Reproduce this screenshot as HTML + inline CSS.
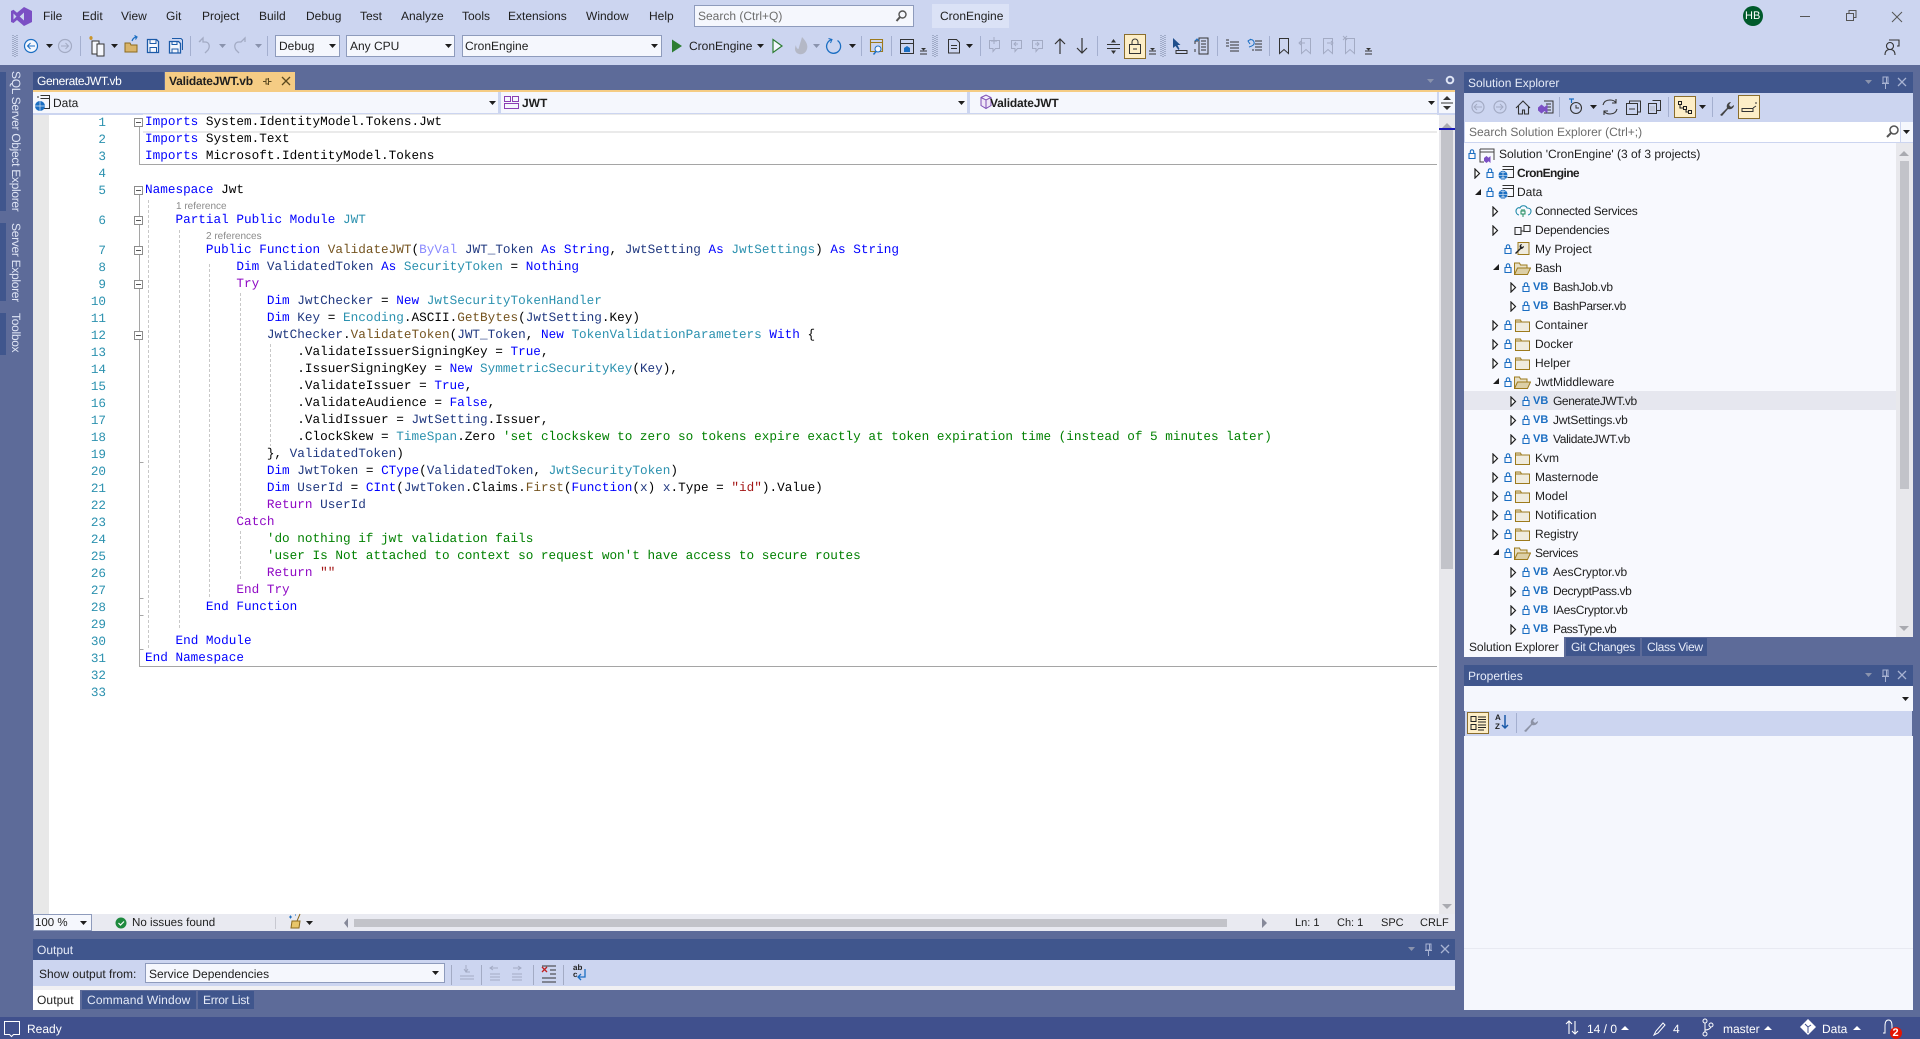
<!DOCTYPE html>
<html lang="en"><head><meta charset="utf-8"><title>CronEngine - Visual Studio</title>
<style>
html,body{margin:0;padding:0;width:1920px;height:1039px;overflow:hidden;background:#5d6b99}
body{position:relative;font-family:"Liberation Sans",sans-serif;font-size:12px;color:#1e1e1e;text-rendering:geometricPrecision}
.b{position:absolute}
.a{position:absolute;white-space:pre;line-height:18px;height:18px}
.w{color:#fff}
.lt{color:#e6ebf8}
.t{position:absolute;white-space:pre;line-height:19px;height:19px;color:#1e1e1e;margin-top:1px}
.vb{position:absolute;white-space:pre;line-height:19px;color:#1b6ec2;font-weight:bold;font-size:11px;margin-top:1px}
.cd{position:absolute;left:145px;white-space:pre;font-family:"Liberation Mono",monospace;font-size:12.69px;line-height:17px;height:17px;color:#000;margin-top:-1px}
.ln{position:absolute;left:70px;width:36px;text-align:right;font-family:"Liberation Mono",monospace;font-size:12.65px;line-height:17px;color:#2b91af}
.k{color:#0000ff}.y{color:#2b91af}.c{color:#008000}.m{color:#74531f}.p{color:#8f08c4}.s{color:#a31515}.v{color:#1f377f}.u{color:#8a8aff}
.cb{position:absolute;background:#f5f7fd;border:1px solid #8e9bbc;box-sizing:border-box;line-height:20px;padding-left:4px;white-space:pre}
.vt{position:absolute;writing-mode:vertical-rl;white-space:pre;color:#dfe5f5;line-height:14px;font-size:12px;letter-spacing:-.3px}
svg{position:absolute;left:0;top:0}
</style></head><body>

<!-- Backgrounds -->
<div class="b" style="left:0;top:0;width:1920px;height:65px;background:#ccd5f0"></div>
<div class="b" style="left:932px;top:4px;width:77px;height:24px;background:#dbe2f6"></div>
<div class="b" style="left:694px;top:5px;width:220px;height:22px;background:#f5f7fd;border:1px solid #8e9bbc;box-sizing:border-box"></div>
<div class="cb" style="left:275px;top:35px;width:65px;height:22px"></div>
<div class="cb" style="left:346px;top:35px;width:109px;height:22px"></div>
<div class="cb" style="left:462px;top:35px;width:200px;height:22px"></div>

<!-- left strips -->
<div class="b" style="left:0;top:72px;width:6px;height:139px;background:#40568d"></div>
<div class="b" style="left:0;top:223px;width:6px;height:78px;background:#40568d"></div>
<div class="b" style="left:0;top:313px;width:6px;height:42px;background:#40568d"></div>
<div class="vt" style="left:9px;top:71px">SQL Server Object Explorer</div>
<div class="vt" style="left:9px;top:223px">Server Explorer</div>
<div class="vt" style="left:9px;top:313px">Toolbox</div>

<!-- Editor tabs -->
<div class="b" style="left:33px;top:72px;width:131px;height:18px;background:#3d5288"></div>
<div class="b" style="left:165px;top:72px;width:130px;height:18px;background:#f5cc84"></div>
<div class="b" style="left:33px;top:90px;width:1422px;height:2px;background:#f5cc84"></div>
<div class="b" style="left:33px;top:92px;width:1422px;height:23px;background:#ccd5f0"></div>
<div class="b" style="left:33px;top:92px;width:465px;height:21px;background:#f5f7fd"></div>
<div class="b" style="left:501px;top:92px;width:466px;height:21px;background:#f5f7fd"></div>
<div class="b" style="left:970px;top:92px;width:467px;height:21px;background:#f5f7fd"></div>
<div class="b" style="left:1439px;top:92px;width:16px;height:21px;background:#f5f7fd"></div>

<!-- Editor -->
<div class="b" style="left:33px;top:115px;width:1422px;height:799px;background:#fff"></div>
<div class="b" style="left:33px;top:115px;width:16px;height:799px;background:#e8e8e8"></div>
<div class="b" style="left:143px;top:114px;width:1294px;height:16px;border:solid #eaeaea;border-width:1px 0 2px 0"></div>
<div class="b" style="left:1439px;top:115px;width:16px;height:799px;background:#e8e8ec"></div>
<div class="b" style="left:1441px;top:130px;width:12px;height:439px;background:#c2c3c9"></div>
<div class="b" style="left:1439px;top:128px;width:16px;height:2px;background:#1a1ab8"></div>
<div class="b" style="left:33px;top:914px;width:1422px;height:17px;background:#e9eaf1"></div>
<div class="b" style="left:33px;top:914px;width:59px;height:17px;background:#f5f7fd;border:1px solid #8e9bbc;box-sizing:border-box"></div>
<div class="b" style="left:354px;top:919px;width:873px;height:8px;background:#c2c3c9"></div>
<div class="b" style="left:275px;top:917px;width:1px;height:12px;background:#c8c9d1"></div>

<!-- Output -->
<div class="b" style="left:33px;top:939px;width:1422px;height:21px;background:#40568d"></div>
<div class="b" style="left:33px;top:960px;width:1422px;height:26px;background:#ccd5f0"></div>
<div class="b" style="left:33px;top:986px;width:1422px;height:4px;background:#f0f0f3"></div>
<div class="b" style="left:33px;top:990px;width:47px;height:20px;background:#fff"></div>
<div class="b" style="left:82px;top:991px;width:114px;height:18px;background:#40568d"></div>
<div class="b" style="left:198px;top:991px;width:56px;height:18px;background:#40568d"></div>
<div class="cb" style="left:145px;top:963px;width:300px;height:20px"></div>

<!-- Status bar -->
<div class="b" style="left:0;top:1017px;width:1920px;height:22px;background:#40508d"></div>

<!-- Right panel -->
<div class="b" style="left:1464px;top:72px;width:449px;height:21px;background:#40568d"></div>
<div class="b" style="left:1464px;top:93px;width:449px;height:28px;background:#ccd5f0"></div>
<div class="b" style="left:1464px;top:121px;width:449px;height:22px;background:#ccd5f0"></div>
<div class="b" style="left:1465px;top:122px;width:435px;height:20px;background:#fff"></div>
<div class="b" style="left:1901px;top:122px;width:12px;height:20px;background:#f5f7fd"></div>
<div class="b" style="left:1464px;top:143px;width:432px;height:494px;background:#f8f9fe"></div>
<div class="b" style="left:1896px;top:143px;width:17px;height:494px;background:#e8e8ec"></div>
<div class="b" style="left:1900px;top:161px;width:9px;height:328px;background:#c2c3c9"></div>
<div class="b" style="left:1464px;top:391px;width:432px;height:19px;background:#e6e7ef"></div>
<div class="b" style="left:1464px;top:637px;width:100px;height:20px;background:#f8f9fe"></div>
<div class="b" style="left:1566px;top:638px;width:74px;height:18px;background:#40568d"></div>
<div class="b" style="left:1642px;top:638px;width:65px;height:18px;background:#40568d"></div>
<div class="b" style="left:1464px;top:665px;width:449px;height:21px;background:#40568d"></div>
<div class="b" style="left:1464px;top:686px;width:449px;height:25px;background:#f5f7fd"></div>
<div class="b" style="left:1465px;top:711px;width:447px;height:25px;background:#ccd5f0"></div>
<div class="b" style="left:1464px;top:736px;width:449px;height:274px;background:#f5f7fd"></div>
<div class="b" style="left:1464px;top:948px;width:449px;height:1px;background:#e8eaf2"></div>

<!-- Icons -->
<svg width="1920" height="1039" viewBox="0 0 1920 1039" fill="none">
<defs>
<symbol id="lock" viewBox="0 0 8 10" width="8" height="10"><path d="M1 4.5h6v5H1zM2.300 4.500V2.500a1.700 1.700 0 0 1 3.400 0v2" stroke="#1b6ec2" stroke-width="1.100" fill="#f8f9fe"/></symbol>
<symbol id="fc" viewBox="0 0 15 13" width="15" height="13"><path d="M.5 1h5l1 2h8v9.500H.5z" fill="#efebde" stroke="#9d7a1c"/><path d="M.5 3H6" stroke="#9d7a1c"/></symbol>
<symbol id="fo" viewBox="0 0 17 13" width="17" height="13"><path d="M.5 12.500V1h5l1 2h6.500v3" stroke="#9d7a1c" fill="#e8e0c6"/><path d="M.5 12.500L3.500 6h13l-3 6.500z" fill="#dccfa6" stroke="#9d7a1c"/></symbol>
<symbol id="ar" viewBox="0 0 7 11" width="7" height="11"><path d="M1 1l4.500 4.500L1 10z" fill="#fff" stroke="#1e1e1e" stroke-width="1.200"/></symbol>
<symbol id="ex" viewBox="0 0 8 8" width="8" height="8"><path d="M7 1v6H1z" fill="#1e1e1e"/></symbol>
<symbol id="dd" viewBox="0 0 7 4" width="7" height="4"><path d="M0 0h7L3.500 4z" fill="#1e1e1e"/></symbol>
<symbol id="ddg" viewBox="0 0 7 4" width="7" height="4"><path d="M0 0h7L3.500 4z" fill="#8a93ad"/></symbol>
<symbol id="proj" viewBox="0 0 16 14" width="16" height="14"><path d="M4.500.5h11v11h-6" stroke="#333" fill="#f8f9fe"/><path d="M4.500 3.500h11" stroke="#333"/><circle cx="5" cy="9.300" r="4.500" fill="#1b6ec2"/><path d="M.6 9.300h9M5 5v8.600M2.500 6c1.500 1 3.500 1 5 0M2.500 12.500c1.500-1 3.500-1 5 0" stroke="#dbe7f5" stroke-width=".7"/></symbol>
<symbol id="clo" viewBox="0 0 10 10" width="10" height="10"><path d="M1 1l8 8M9 1l-8 8" stroke="#a8b3d2" stroke-width="1.300"/></symbol>
<symbol id="pin" viewBox="0 0 9 13" width="9" height="13"><path d="M2 1h5v6H2zM1 7.500h7M4.500 8v5M5.500 1v6" stroke="#a8b3d2"/></symbol>
</defs>

<!-- VS logo -->
<path d="M24 7l8 4v11l-8 4-7-6-3.500 3L11 22V11l2.500-1.300L17 12.800zM13.500 13.500v6l3-3zM24 12.500l-4.300 4 4.300 4z" fill="#7b4fc4" fill-rule="evenodd"/>

<!-- search icon -->
<circle cx="902.500" cy="14.500" r="3.500" stroke="#555" stroke-width="1.400"/><path d="M900 17l-3.500 4" stroke="#555" stroke-width="2"/>

<!-- Toolbar left -->
<path d="M13 35v22M15 36v22M17 35v22" stroke="#76829f" stroke-dasharray="1 1"/>
<circle cx="31" cy="46" r="6.500" stroke="#1b6ec2" stroke-width="1.200" fill="#f5f7fd"/><path d="M35 46h-7M30.500 43l-3 3 3 3" stroke="#1b6ec2"/>
<use href="#dd" x="46" y="44"/>
<circle cx="65" cy="46" r="6.500" stroke="#a3abc4" stroke-width="1.200"/><path d="M61 46h7M65.500 43l3 3-3 3" stroke="#a3abc4"/>
<path d="M80.500 36v20M190.500 36v20M267.500 36v20M861.500 36v20M891.500 36v20M980.500 36v20M1097.500 36v20M1217.500 36v20M1269.500 36v20" stroke="#a4afcf"/>
<path d="M92 41h7v13h-7z" stroke="#333" fill="#f5f7fd"/><path d="M97 44h7v12h-7z" stroke="#333" fill="#f5f7fd"/><path d="M91 36v4M89 38h4M90 36.500l2 3M92 36.500l-2 3" stroke="#c9952a"/>
<use href="#dd" x="111" y="44"/>
<path d="M125 52V43h5l1 2h6v7z" fill="#d9b46a" stroke="#8c6a1e"/><path d="M132 41c1-3 3-4 5-4M134.500 35.500l2.500 1.500-1.500 2.500" stroke="#1b6ec2" stroke-width="1.200"/>
<path d="M147.500 39.500h9l2 2v11h-11z" stroke="#1b5aa8" stroke-width="1.300" fill="#f5f7fd"/><path d="M150 39.500v4h6v-4M150 52.500v-5h6.500v5" stroke="#1b5aa8"/>
<path d="M169.500 41.500h9l2 2v9.500h-11z" stroke="#1b5aa8" stroke-width="1.300" fill="#f5f7fd"/><path d="M172 38.500h9l1.500 1.500v10" stroke="#1b5aa8"/><path d="M172 41.500v3h5v-3M172 53v-4h6v4" stroke="#1b5aa8"/>
<path d="M200 42v-1l-1 1 4-4v4h2c4 0 5.500 4 3 8l-3 3" stroke="#a3abc4" stroke-width="1.300"/>
<use href="#ddg" x="219" y="44"/>
<path d="M245 42v-4l-4 4h-2c-4 0-5.500 4-3 8l3 3" stroke="#a3abc4" stroke-width="1.300"/>
<use href="#ddg" x="255" y="44"/>
<use href="#dd" x="329" y="44"/><use href="#dd" x="445" y="44"/><use href="#dd" x="651" y="44"/>
<path d="M672 39.500l10 6.500-10 6.500z" fill="#2d7d32"/>
<use href="#dd" x="757" y="44"/>
<path d="M773 39.500l9 6.500-9 6.500z" stroke="#2d7d32" stroke-width="1.200" fill="#f5f7fd"/>
<path d="M802 37c5 5 6 9 5 12-1 4-5 6-8 5-4-1-5-5-3-9 0 2 1 4 2.500 4 1-4 2.500-8 3.500-12z" fill="#b4b8c6"/>
<use href="#ddg" x="813" y="44"/>
<path d="M832 39.500a7 7 0 1 0 5.500 1" stroke="#1b6ec2" stroke-width="1.300"/><path d="M828.500 38.500l3.500 1-1.500 3.500" stroke="#1b6ec2"/>
<use href="#dd" x="849" y="44"/>
<path d="M870.500 39.500h12v12h-12zM870.500 42.500h12" stroke="#9d7a1c" stroke-width="1.100"/><circle cx="878" cy="49" r="3" stroke="#1b6ec2" fill="#f5f7fd"/><path d="M876 51.500l-2.500 3" stroke="#1b6ec2" stroke-width="1.400"/>
<path d="M900.500 39.500h13v14h-13zM900.500 43.500h13" stroke="#333"/><path d="M904 52v-4l3-2 3 2v4z" fill="#1b6ec2"/>
<path d="M920 51h7M920 54h7" stroke="#333"/><path d="M921 48l2.500 2.500L926 48z" fill="#333"/>
<path d="M933 35v22M935 36v22M937 35v22" stroke="#76829f" stroke-dasharray="1 1"/>
<path d="M948.500 39.500h8l3 3v10.500h-11zM951 45.500h6M951 48.500h6" stroke="#333"/>
<use href="#dd" x="966" y="44"/>
<g stroke="#a3abc4"><path d="M989.500 40.500h10v8h-4l-2.500 3v-3h-3.500zM994 37v7M991 41h6"/><path d="M1011.500 40.500h10v8h-4l-2.500 3v-3h-3.500zM1018 44l-4 0M1016 42l-2 2 2 2"/><path d="M1032.500 40.500h10v8h-4l-2.500 3v-3h-3.500zM1035 44h4M1037 42l2 2-2 2"/></g>
<path d="M1060 54V39M1055 44l5-5 5 5M1082 38v15M1077 48l5 5 5-5" stroke="#333" stroke-width="1.200"/>
<path d="M1107 44.500h13M1107 48.500h13" stroke="#333"/><path d="M1111 42.500l2.500-3.500 2.500 3.500zM1111 50.500l2.500 3.500 2.500-3.500z" fill="#333"/>
<rect x="1124.500" y="34.500" width="21" height="24" fill="#fdeec7" stroke="#8a6d2c"/><path d="M1129.500 44.500h11v9h-11zM1132 44.500v-2.500a3 3 0 0 1 6 0v2.500M1133 49h4" stroke="#333"/>
<path d="M1149 51h7M1149 54h7" stroke="#333"/><path d="M1150 48l2.500 2.500L1155 48z" fill="#333"/>
<path d="M1161 35v22M1163 36v22M1165 35v22" stroke="#76829f" stroke-dasharray="1 1"/>
<path d="M1173 38v10l2.500-2 3 4 1-1-2-4h3z" fill="#1e4e8c"/><path d="M1176 50.500h11v3h-11z" stroke="#333"/>
<path d="M1195 44v-3h3M1195 52v-3M1199 38h9v16h-9zM1201 41h5M1201 44h5M1201 47h5M1201 50h5" stroke="#333"/><path d="M1195 41l2-2 2 2" stroke="#1b6ec2"/>
<path d="M1226 40h3M1230 42h9M1230 45h9M1230 48h9M1230 51h9M1226 43h3M1226 46h3" stroke="#333"/>
<path d="M1248 41c2-2 5-2 6 1s-2 4-5 5M1251 39l-3 2 2 3" stroke="#1b6ec2"/><path d="M1255 41h7M1255 44h7M1255 47h7M1255 50h7M1252 50h2" stroke="#333"/>
<path d="M1279.500 38.500h9v15l-4.500-4-4.500 4z" stroke="#333"/>
<g stroke="#a3abc4"><path d="M1301.500 38.500h9v15l-4.500-4-4.500 4zM1299 43h6M1301 41l-2 2 2 2"/><path d="M1323.500 38.500h9v15l-4.500-4-4.500 4zM1327 43h6M1331 41l2 2-2 2"/><path d="M1345.500 38.500h9v15l-4.500-4-4.500 4zM1343 36l4 4M1347 36l-4 4"/></g>
<path d="M1365 51h7M1365 54h7" stroke="#333"/><path d="M1366 48l2.500 2.500L1371 48z" fill="#333"/>

<!-- Top right -->
<circle cx="1753" cy="16" r="10" fill="#005a2b"/>
<path d="M1800 16.500h10" stroke="#555"/><path d="M1846.500 13.500h7v7h-7zM1849 13.500v-3h7v7h-2.500" stroke="#555"/>
<path d="M1892 12l10 10M1902 12l-10 10" stroke="#555"/>
<circle cx="1890" cy="46" r="3.500" stroke="#333" stroke-width="1.100"/><path d="M1885 55c0-4 2-5.500 5-5.500s5 1.500 5 5.500M1889 40h10v6h-2" stroke="#333" stroke-width="1.100"/>

<!-- Editor strip -->
<use href="#ddg" x="1427" y="79"/>
<circle cx="1450" cy="80" r="3.300" stroke="#dfe5f5" stroke-width="2"/>
<path d="M263 81.500h3M268.500 78v7M268.500 81.500h3M266 79v5h2.500v-5z" stroke="#5c4a1f"/>
<path d="M282 77l8 8M290 77l-8 8" stroke="#5c4a1f" stroke-width="1.300"/>

<!-- nav bar icons -->
<path d="M40.500 95.500h9v13h-6M38 96v2M40.500 98.500h9" stroke="#333"/><circle cx="40" cy="106" r="5" fill="#1b6ec2"/><path d="M35 106h10M40 101v10" stroke="#dbe7f5" stroke-width=".7"/>
<path d="M504.500 96.500h6v5h-6zM512.500 96.500h6v5h-6zM504.500 103.500h14v5h-14z" stroke="#8a3fb3"/>
<path d="M981 97.500l5-2.500 5 2.500v8l-5 3-5-3zM981 97.500l5 2.500 5-2.500M986 100v8" stroke="#7f4fb5" fill="#efe6f7"/>
<use href="#dd" x="489" y="101"/><use href="#dd" x="958" y="101"/><use href="#dd" x="1428" y="101"/>
<path d="M1441 103h12" stroke="#333"/><path d="M1443 100l4-4 4 4zM1443 106l4 4 4-4z" fill="#333"/>
<path d="M1442 128l5-5 5 5z" fill="#a9aab0"/>
<path d="M1442 904l5 5 5-5z" fill="#a9aab0"/>

<!-- Outlining -->
<path d="M139.500 127v37.500H1437M139.500 195v471.500H1437M139.500 462.500h4M139.500 598.500h4M139.500 615.500h4M139.500 649.500h4" stroke="#a5a5a5"/>
<g stroke="#8c8c8c" fill="#fff"><rect x="134.500" y="118.500" width="8" height="8"/><rect x="134.500" y="186.500" width="8" height="8"/><rect x="134.500" y="216.500" width="8" height="8"/><rect x="134.500" y="246.500" width="8" height="8"/><rect x="134.500" y="280.500" width="8" height="8"/><rect x="134.500" y="331.500" width="8" height="8"/></g>
<path d="M136 122.500h5M136 190.500h5M136 220.500h5M136 250.500h5M136 284.500h5M136 335.500h5" stroke="#555"/>
<g stroke="#c8c8c8" stroke-dasharray="3 2"><path d="M148.500 200v448M179.500 230v400M209.500 264v333M240.500 293v221M240.500 531v49M270.500 344v102"/></g>

<!-- Editor status -->
<use href="#dd" x="80" y="921"/>
<circle cx="121" cy="923" r="5.500" fill="#1e8a3e"/><path d="M118.500 923l2 2 3.500-3.500" stroke="#fff" stroke-width="1.200"/>
<path d="M300 914l-3 7M292 921h8l-1 7h-8z" stroke="#8c6a1e" fill="#e8c66a"/><path d="M289 917h3M290.500 915.500v3M295 915h1" stroke="#1b6ec2"/>
<use href="#dd" x="306" y="921"/>
<path d="M348 918v10l-4-5zM1262 918v10l5-5z" fill="#868999"/>

<!-- Output strip -->
<use href="#ddg" x="1408" y="947"/><use href="#pin" x="1424" y="943"/><use href="#clo" x="1440" y="944"/>
<use href="#dd" x="432" y="971"/>
<g stroke="#a3abc4"><path d="M451.500 965v20M481.500 965v20M533.500 965v20M563.500 965v20"/><path d="M460 976h14M460 979h14M466 965v7h4M464 969l2 3 2-3"/><path d="M490 974h10M490 977h10M490 980h10M490 968h8M493 966l-3 2 3 2"/><path d="M512 974h10M512 977h10M512 980h10M513 968h8M518 966l3 2-3 2"/></g>
<path d="M542 966h14M550 970h6M550 974h6M542 978h14M542 982h14" stroke="#333"/><path d="M542 967l5 5M547 967l-5 5" stroke="#c02020" stroke-width="1.300"/>
<path d="M585 969v8h-7M581 974l-3 3 3 3" stroke="#1b6ec2" stroke-width="1.300"/>

<!-- Status bar icons -->
<path d="M4.500 1021.500h15v13h-6l-2 2-2-2h-5z" stroke="#fff"/>
<path d="M1569 1034v-13M1566 1024l3-3 3 3M1575 1021v13M1572 1031l3 3 3-3" stroke="#fff" stroke-width="1.100"/>
<path d="M1621 1030l4-4 4 4zM1764 1030l4-4 4 4zM1853 1030l4-4 4 4z" fill="#fff"/>
<path d="M1654 1035l2-4 7-8 2 2-7 8z" stroke="#fff"/>
<circle cx="1705" cy="1021" r="2" stroke="#fff"/><circle cx="1705" cy="1034" r="2" stroke="#fff"/><circle cx="1711" cy="1025" r="2" stroke="#fff"/><path d="M1705 1023v9M1705 1030c3 0 5-1 6-3" stroke="#fff"/>
<path d="M1808 1019l8 8-8 8-8-8z" fill="#fff"/><path d="M1805 1024l3 3v6M1808 1027l3-2" stroke="#40508d"/>
<path d="M1883 1033h2v-7c0-5 2-6 3.500-6s3.500 1 3.500 6v4" stroke="#fff" fill="none"/>
<circle cx="1896" cy="1033" r="6" fill="#e51400"/>

<!-- Solution explorer title + toolbar -->
<use href="#ddg" x="1865" y="80"/><use href="#pin" x="1881" y="76"/><use href="#clo" x="1897" y="77"/>
<circle cx="1478" cy="107" r="6" stroke="#a3abc4" stroke-width="1.200"/><path d="M1482 107h-7M1477 104l-3 3 3 3" stroke="#a3abc4"/>
<circle cx="1500" cy="107" r="6" stroke="#a3abc4" stroke-width="1.200"/><path d="M1496 107h7M1500 104l3 3-3 3" stroke="#a3abc4"/>
<path d="M1516 108l7-7 7 7M1518.500 106v8h4v-4h2v4h4v-8" stroke="#333" stroke-width="1.100"/>
<path d="M1544 101h9v12h-9" stroke="#333"/><path d="M1546 104h5M1546 107h5M1546 110h5" stroke="#333"/><path d="M1538 107.500l3.500-3 3 2.500 3-2.500v9l-3-2.500-3 2.500-3.500-3z" fill="#7b4fc4"/>
<path d="M1559.500 97v20M1668.500 97v20M1712.500 97v20" stroke="#a4afcf"/>
<circle cx="1576" cy="108" r="5.500" stroke="#333" stroke-width="1.100"/><path d="M1576 105v3h3" stroke="#333"/><path d="M1569 99h5M1571.500 99v4" stroke="#1b6ec2" stroke-width="1.200"/>
<use href="#dd" x="1590" y="105"/>
<path d="M1603 105c1-4 4-5 7-5 3 0 5 1 6 3M1617 109c-1 4-4 5-7 5s-5-1-6-3" stroke="#333" stroke-width="1.100"/><path d="M1616 99v4h-4M1604 115v-4h4" stroke="#333" stroke-width="1.100"/>
<path d="M1626.500 103.500h11v11h-11zM1629.500 103.500v-2.500h11v11h-3M1629 109h6" stroke="#333"/>
<path d="M1648.500 103.500h8v10h-8z" stroke="#333"/><path d="M1652.500 100.500h8v10h-4" stroke="#333"/><path d="M1650 106h5v5h-5z" fill="#bfc6d9"/>
<rect x="1674.500" y="96.500" width="21" height="21" fill="#fdeec7" stroke="#8a6d2c"/><path d="M1678.500 101.500h3v3h-3zM1683.500 106.500h3v3h-3zM1688.500 110.500h3v3h-3zM1680 105v3h3.500M1686 110v2h2.500" stroke="#1e1e1e"/>
<use href="#dd" x="1699" y="105"/>
<path d="M1720 115l7-7c-1-3 1-6 4-6l-2 3 2 2 3-2c0 3-3 5-6 4l-6 7z" fill="#444"/>
<rect x="1738.500" y="95.500" width="21" height="23" fill="#fdeec7" stroke="#8a6d2c"/><path d="M1742 108.500h11v3h-11zM1753 108l3-2M1755 103h2" stroke="#333"/>
<circle cx="1894" cy="130" r="4" stroke="#555" stroke-width="1.500"/><path d="M1891 133l-4 4" stroke="#555" stroke-width="2"/>
<path d="M1900.500 122v20" stroke="#ccd5f0"/><use href="#dd" x="1903" y="130"/>

<!-- Tree: solution icon + project rows -->
<use href="#lock" x="1468" y="149"/>
<path d="M1480 149h14v11" stroke="#444"/><path d="M1480 149v13h4M1480 152h14" stroke="#444"/><path d="M1484 158l2.500-2 2 1.800 2-1.800v7l-2-1.800-2 1.800-2.500-2z" fill="#7b4fc4"/>
<use href="#ar" x="1474" y="168"/><use href="#lock" x="1486" y="168"/><use href="#proj" x="1498" y="166"/>
<use href="#ex" x="1474" y="188"/><use href="#lock" x="1486" y="187"/><use href="#proj" x="1498" y="185"/>
<use href="#ar" x="1492" y="206"/>
<path d="M1519 215a4 4 0 0 1-3-4c0-2 2-4 4-3 1-3 6-3 7 0 2 0 4 1 4 3a4 4 0 0 1-3 4" stroke="#1b88a8" stroke-width="1.100" fill="#f8f9fe"/><path d="M1521 211h4v3h-4zM1523 214v3M1522 209v2M1524 209v2" stroke="#1e8a5e"/>
<use href="#ar" x="1492" y="225"/>
<path d="M1515 227.500h6v7h-6zM1524 225.500h6v6h-6zM1521 231h3" stroke="#333" stroke-width="1.100"/>
<use href="#lock" x="1504" y="244"/>
<path d="M1518 242.500h11v12h-11z" fill="#efebde" stroke="#9d7a1c"/><path d="M1515 253l5-5c-1-2 0-4 2-4l-1 2 1 1 2-1c0 2-2 3-3 3l-5 5z" fill="#222"/>

<g>
<use href="#ex" x="1492" y="263"/><use href="#lock" x="1504" y="263"/><use href="#fo" x="1514" y="262"/>
<use href="#ar" x="1510" y="282"/><use href="#lock" x="1522" y="282"/>
<use href="#ar" x="1510" y="301"/><use href="#lock" x="1522" y="301"/>
<use href="#ar" x="1492" y="320"/><use href="#lock" x="1504" y="320"/><use href="#fc" x="1515" y="319"/>
<use href="#ar" x="1492" y="339"/><use href="#lock" x="1504" y="339"/><use href="#fc" x="1515" y="338"/>
<use href="#ar" x="1492" y="358"/><use href="#lock" x="1504" y="358"/><use href="#fc" x="1515" y="357"/>
<use href="#ex" x="1492" y="377"/><use href="#lock" x="1504" y="377"/><use href="#fo" x="1514" y="376"/>
<use href="#ar" x="1510" y="396"/><use href="#lock" x="1522" y="396"/>
<use href="#ar" x="1510" y="415"/><use href="#lock" x="1522" y="415"/>
<use href="#ar" x="1510" y="434"/><use href="#lock" x="1522" y="434"/>
<use href="#ar" x="1492" y="453"/><use href="#lock" x="1504" y="453"/><use href="#fc" x="1515" y="452"/>
<use href="#ar" x="1492" y="472"/><use href="#lock" x="1504" y="472"/><use href="#fc" x="1515" y="471"/>
<use href="#ar" x="1492" y="491"/><use href="#lock" x="1504" y="491"/><use href="#fc" x="1515" y="490"/>
<use href="#ar" x="1492" y="510"/><use href="#lock" x="1504" y="510"/><use href="#fc" x="1515" y="509"/>
<use href="#ar" x="1492" y="529"/><use href="#lock" x="1504" y="529"/><use href="#fc" x="1515" y="528"/>
<use href="#ex" x="1492" y="548"/><use href="#lock" x="1504" y="548"/><use href="#fo" x="1514" y="547"/>
<use href="#ar" x="1510" y="567"/><use href="#lock" x="1522" y="567"/>
<use href="#ar" x="1510" y="586"/><use href="#lock" x="1522" y="586"/>
<use href="#ar" x="1510" y="605"/><use href="#lock" x="1522" y="605"/>
<use href="#ar" x="1510" y="624"/><use href="#lock" x="1522" y="624"/>
</g>
<path d="M1899 156l5-5 5 5z" fill="#a9aab0"/><path d="M1899 626l5 5 5-5z" fill="#a9aab0"/>

<!-- Properties -->
<use href="#ddg" x="1865" y="673"/><use href="#pin" x="1881" y="669"/><use href="#clo" x="1897" y="670"/>
<use href="#dd" x="1902" y="697"/>
<rect x="1467.500" y="712.500" width="21" height="21" fill="#fdeec7" stroke="#8a6d2c"/>
<path d="M1471 716.500h5v5h-5zM1471 724.500h5v5h-5zM1478 717h8M1478 719.500h8M1478 722h8M1478 725h8M1478 727.500h8M1478 730h6" stroke="#222"/>
<path d="M1505 715v13M1502 725l3 3 3-3" stroke="#1b5aa8" stroke-width="1.500"/>
<path d="M1516.500 713v20" stroke="#a4afcf"/>
<path d="M1524 731l7-7c-1-3 1-6 4-6l-2 3 2 2 3-2c0 3-3 5-6 4l-6 7z" fill="#8d93a6"/>
</svg>

<!-- Menu -->
<div class="a" style="left:43px;top:7px">File</div>
<div class="a" style="left:82px;top:7px">Edit</div>
<div class="a" style="left:121px;top:7px">View</div>
<div class="a" style="left:166px;top:7px">Git</div>
<div class="a" style="left:202px;top:7px">Project</div>
<div class="a" style="left:259px;top:7px">Build</div>
<div class="a" style="left:306px;top:7px">Debug</div>
<div class="a" style="left:360px;top:7px">Test</div>
<div class="a" style="left:401px;top:7px">Analyze</div>
<div class="a" style="left:462px;top:7px">Tools</div>
<div class="a" style="left:508px;top:7px">Extensions</div>
<div class="a" style="left:586px;top:7px">Window</div>
<div class="a" style="left:649px;top:7px">Help</div>
<div class="a" style="left:698px;top:7px;color:#6d6d6d">Search (Ctrl+Q)</div>
<div class="a" style="left:940px;top:7px">CronEngine</div>
<div class="a" style="left:1745px;top:7px;color:#fff;font-size:11px">HB</div>

<!-- Toolbar text -->
<div class="a" style="left:279px;top:37px">Debug</div>
<div class="a" style="left:350px;top:37px">Any CPU</div>
<div class="a" style="left:465px;top:37px">CronEngine</div>
<div class="a" style="left:689px;top:37px">CronEngine</div>

<!-- Tabs -->
<div class="a w" style="left:37px;top:72px;letter-spacing:-.35px">GenerateJWT.vb</div>
<div class="a" style="left:169px;top:72px;font-weight:bold;letter-spacing:-.2px">ValidateJWT.vb</div>
<div class="a" style="left:53px;top:94px">Data</div>
<div class="a" style="left:522px;top:94px;font-weight:bold">JWT</div>
<div class="a" style="left:990px;top:94px;font-weight:bold;letter-spacing:-.2px">ValidateJWT</div>

<!-- Line numbers -->
<div class="ln" style="top:114px">1</div>
<div class="ln" style="top:131px">2</div>
<div class="ln" style="top:148px">3</div>
<div class="ln" style="top:165px">4</div>
<div class="ln" style="top:182px">5</div>
<div class="ln" style="top:212px">6</div>
<div class="ln" style="top:242px">7</div>
<div class="ln" style="top:259px">8</div>
<div class="ln" style="top:276px">9</div>
<div class="ln" style="top:293px">10</div>
<div class="ln" style="top:310px">11</div>
<div class="ln" style="top:327px">12</div>
<div class="ln" style="top:344px">13</div>
<div class="ln" style="top:361px">14</div>
<div class="ln" style="top:378px">15</div>
<div class="ln" style="top:395px">16</div>
<div class="ln" style="top:412px">17</div>
<div class="ln" style="top:429px">18</div>
<div class="ln" style="top:446px">19</div>
<div class="ln" style="top:463px">20</div>
<div class="ln" style="top:480px">21</div>
<div class="ln" style="top:497px">22</div>
<div class="ln" style="top:514px">23</div>
<div class="ln" style="top:531px">24</div>
<div class="ln" style="top:548px">25</div>
<div class="ln" style="top:565px">26</div>
<div class="ln" style="top:582px">27</div>
<div class="ln" style="top:599px">28</div>
<div class="ln" style="top:616px">29</div>
<div class="ln" style="top:633px">30</div>
<div class="ln" style="top:650px">31</div>
<div class="ln" style="top:667px">32</div>
<div class="ln" style="top:684px">33</div>

<!-- Code -->
<div class="cd" style="top:114px"><span class="k">Imports</span> System.IdentityModel.Tokens.Jwt</div>
<div class="cd" style="top:131px"><span class="k">Imports</span> System.Text</div>
<div class="cd" style="top:148px"><span class="k">Imports</span> Microsoft.IdentityModel.Tokens</div>
<div class="cd" style="top:182px"><span class="k">Namespace</span> Jwt</div>
<div class="a" style="left:176px;top:198px;font-size:10px;color:#8a8a8a">1 reference</div>
<div class="cd" style="top:212px">    <span class="k">Partial Public Module</span> <span class="y">JWT</span></div>
<div class="a" style="left:206px;top:228px;font-size:10px;color:#8a8a8a">2 references</div>
<div class="cd" style="top:242px">        <span class="k">Public Function</span> <span class="m">ValidateJWT</span>(<span class="u">ByVal</span> <span class="v">JWT_Token</span> <span class="k">As String</span>, <span class="v">JwtSetting</span> <span class="k">As</span> <span class="y">JwtSettings</span>) <span class="k">As String</span></div>
<div class="cd" style="top:259px">            <span class="k">Dim</span> <span class="v">ValidatedToken</span> <span class="k">As</span> <span class="y">SecurityToken</span> = <span class="k">Nothing</span></div>
<div class="cd" style="top:276px">            <span class="p">Try</span></div>
<div class="cd" style="top:293px">                <span class="k">Dim</span> <span class="v">JwtChecker</span> = <span class="k">New</span> <span class="y">JwtSecurityTokenHandler</span></div>
<div class="cd" style="top:310px">                <span class="k">Dim</span> <span class="v">Key</span> = <span class="y">Encoding</span>.ASCII.<span class="m">GetBytes</span>(<span class="v">JwtSetting</span>.Key)</div>
<div class="cd" style="top:327px">                <span class="v">JwtChecker</span>.<span class="m">ValidateToken</span>(<span class="v">JWT_Token</span>, <span class="k">New</span> <span class="y">TokenValidationParameters</span> <span class="k">With</span> {</div>
<div class="cd" style="top:344px">                    .ValidateIssuerSigningKey = <span class="k">True</span>,</div>
<div class="cd" style="top:361px">                    .IssuerSigningKey = <span class="k">New</span> <span class="y">SymmetricSecurityKey</span>(<span class="v">Key</span>),</div>
<div class="cd" style="top:378px">                    .ValidateIssuer = <span class="k">True</span>,</div>
<div class="cd" style="top:395px">                    .ValidateAudience = <span class="k">False</span>,</div>
<div class="cd" style="top:412px">                    .ValidIssuer = <span class="v">JwtSetting</span>.Issuer,</div>
<div class="cd" style="top:429px">                    .ClockSkew = <span class="y">TimeSpan</span>.Zero <span class="c">'set clockskew to zero so tokens expire exactly at token expiration time (instead of 5 minutes later)</span></div>
<div class="cd" style="top:446px">                }, <span class="v">ValidatedToken</span>)</div>
<div class="cd" style="top:463px">                <span class="k">Dim</span> <span class="v">JwtToken</span> = <span class="k">CType</span>(<span class="v">ValidatedToken</span>, <span class="y">JwtSecurityToken</span>)</div>
<div class="cd" style="top:480px">                <span class="k">Dim</span> <span class="v">UserId</span> = <span class="k">CInt</span>(<span class="v">JwtToken</span>.Claims.<span class="m">First</span>(<span class="k">Function</span>(<span class="v">x</span>) <span class="v">x</span>.Type = <span class="s">"id"</span>).Value)</div>
<div class="cd" style="top:497px">                <span class="p">Return</span> <span class="v">UserId</span></div>
<div class="cd" style="top:514px">            <span class="p">Catch</span></div>
<div class="cd" style="top:531px">                <span class="c">'do nothing if jwt validation fails</span></div>
<div class="cd" style="top:548px">                <span class="c">'user Is Not attached to context so request won't have access to secure routes</span></div>
<div class="cd" style="top:565px">                <span class="p">Return</span> <span class="s">""</span></div>
<div class="cd" style="top:582px">            <span class="p">End Try</span></div>
<div class="cd" style="top:599px">        <span class="k">End Function</span></div>
<div class="cd" style="top:633px">    <span class="k">End Module</span></div>
<div class="cd" style="top:650px"><span class="k">End Namespace</span></div>

<!-- Editor status text -->
<div class="a" style="left:35px;top:914px;font-size:11.5px">100 %</div>
<div class="a" style="left:132px;top:914px;font-size:11.6px">No issues found</div>
<div class="a" style="left:1295px;top:914px;font-size:11px">Ln: 1</div>
<div class="a" style="left:1337px;top:914px;font-size:11px">Ch: 1</div>
<div class="a" style="left:1381px;top:914px;font-size:11px">SPC</div>
<div class="a" style="left:1420px;top:914px;font-size:11px">CRLF</div>

<!-- Output text -->
<div class="a lt" style="left:37px;top:941px">Output</div>
<div class="a" style="left:39px;top:965px">Show output from:</div>
<div class="a" style="left:149px;top:965px">Service Dependencies</div>
<div class="a" style="left:37px;top:991px;letter-spacing:.1px">Output</div>
<div class="a lt" style="left:87px;top:991px;letter-spacing:.15px">Command Window</div>
<div class="a lt" style="left:203px;top:991px;letter-spacing:-.25px">Error List</div>
<div class="a" style="left:573px;top:964px;font-size:8px;font-weight:bold;line-height:8px;height:8px">ab</div>
<div class="a" style="left:573px;top:971px;font-size:8px;font-weight:bold;line-height:8px;height:8px">c</div>

<!-- Status bar text -->
<div class="a w" style="left:27px;top:1020px">Ready</div>
<div class="a w" style="left:1587px;top:1020px">14 / 0</div>
<div class="a w" style="left:1673px;top:1020px">4</div>
<div class="a w" style="left:1723px;top:1020px">master</div>
<div class="a w" style="left:1822px;top:1020px">Data</div>
<div class="a w" style="left:1892.5px;top:1024px;font-size:11px;font-weight:bold">2</div>

<!-- Right panel text -->
<div class="a lt" style="left:1468px;top:74px">Solution Explorer</div>
<div class="a" style="left:1469px;top:123px;color:#6d6d6d">Search Solution Explorer (Ctrl+;)</div>
<div class="t" style="left:1499px;top:144px">Solution 'CronEngine' (3 of 3 projects)</div>
<div class="t" style="left:1517px;top:163px;font-weight:bold;letter-spacing:-.6px">CronEngine</div>
<div class="t" style="left:1517px;top:182px">Data</div>
<div class="t" style="left:1535px;top:201px;letter-spacing:-.27px">Connected Services</div>
<div class="t" style="left:1535px;top:220px;letter-spacing:-.2px">Dependencies</div>
<div class="t" style="left:1535px;top:239px">My Project</div>
<div class="t" style="left:1535px;top:258px;letter-spacing:-.2px">Bash</div>
<div class="vb" style="left:1533px;top:277px">VB</div><div class="t" style="left:1553px;top:277px;letter-spacing:-.3px">BashJob.vb</div>
<div class="vb" style="left:1533px;top:296px">VB</div><div class="t" style="left:1553px;top:296px;letter-spacing:-.4px">BashParser.vb</div>
<div class="t" style="left:1535px;top:315px;letter-spacing:.1px">Container</div>
<div class="t" style="left:1535px;top:334px">Docker</div>
<div class="t" style="left:1535px;top:353px">Helper</div>
<div class="t" style="left:1535px;top:372px">JwtMiddleware</div>
<div class="vb" style="left:1533px;top:391px">VB</div><div class="t" style="left:1553px;top:391px;letter-spacing:-.4px">GenerateJWT.vb</div>
<div class="vb" style="left:1533px;top:410px">VB</div><div class="t" style="left:1553px;top:410px;letter-spacing:-.2px">JwtSettings.vb</div>
<div class="vb" style="left:1533px;top:429px">VB</div><div class="t" style="left:1553px;top:429px;letter-spacing:-.35px">ValidateJWT.vb</div>
<div class="t" style="left:1535px;top:448px">Kvm</div>
<div class="t" style="left:1535px;top:467px">Masternode</div>
<div class="t" style="left:1535px;top:486px">Model</div>
<div class="t" style="left:1535px;top:505px;letter-spacing:.2px">Notification</div>
<div class="t" style="left:1535px;top:524px;letter-spacing:-.1px">Registry</div>
<div class="t" style="left:1535px;top:543px;letter-spacing:-.4px">Services</div>
<div class="vb" style="left:1533px;top:562px">VB</div><div class="t" style="left:1553px;top:562px;letter-spacing:-.1px">AesCryptor.vb</div>
<div class="vb" style="left:1533px;top:581px">VB</div><div class="t" style="left:1553px;top:581px;letter-spacing:-.4px">DecryptPass.vb</div>
<div class="vb" style="left:1533px;top:600px">VB</div><div class="t" style="left:1553px;top:600px;letter-spacing:-.3px">IAesCryptor.vb</div>
<div class="vb" style="left:1533px;top:619px">VB</div><div class="t" style="left:1553px;top:619px;letter-spacing:-.5px">PassType.vb</div>
<div class="a" style="left:1469px;top:638px;letter-spacing:-.1px">Solution Explorer</div>
<div class="a lt" style="left:1571px;top:638px;letter-spacing:-.25px">Git Changes</div>
<div class="a lt" style="left:1647px;top:638px;letter-spacing:-.35px">Class View</div>
<div class="a lt" style="left:1468px;top:667px">Properties</div>
<div class="a" style="left:1495px;top:713px;font-size:8px;font-weight:bold;line-height:9px;height:9px">A</div>
<div class="a" style="left:1495px;top:722px;font-size:8px;font-weight:bold;line-height:9px;height:9px">Z</div>
</body></html>
